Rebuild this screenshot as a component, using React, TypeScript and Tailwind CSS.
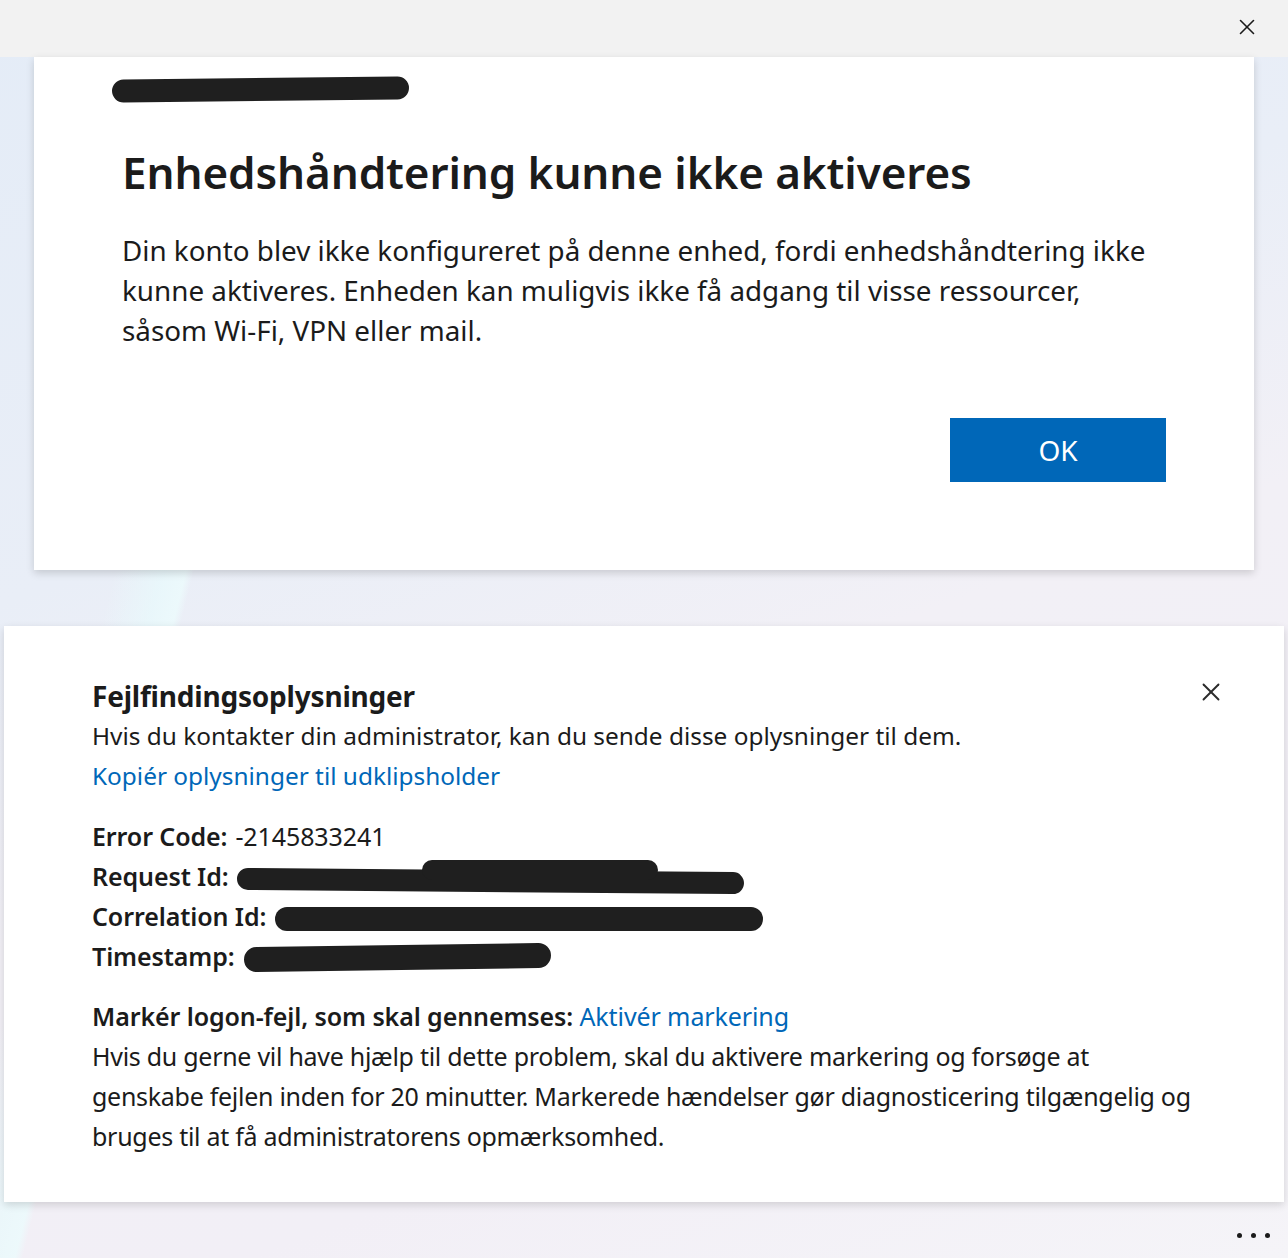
import { X } from "lucide-react";

const font = { fontFamily: '"Noto Sans", "Open Sans", sans-serif' };

const Redact = ({ className }: { className: string }) => (
  <span className={`absolute bg-[#1f1f1f] rounded-full ${className}`} />
);

const InfoRow = ({ label, value, children }: { label: string; value: string; children?: React.ReactNode }) => (
  <div className="relative h-10 flex items-center whitespace-nowrap">
    <span className="font-semibold">{label}</span>
    <span className="ml-[8px]">{value}</span>
    {children}
  </div>
);

export default function App() {
  return (
    <div
      className="relative w-[1288px] h-[1258px] overflow-hidden bg-[linear-gradient(104deg,transparent_0%,transparent_16%,rgba(232,250,252,0.7)_19%,rgba(236,250,252,0.9)_20.5%,transparent_21%),linear-gradient(160deg,#e4ecf7_0%,#e9eef7_35%,#f2f0f6_55%,#f2eff6_78%,#f5f4f8_100%)] text-[#1b1b1b]"
      style={font}
    >
      {/* top bar */}
      <div className="h-[57px] bg-[#f2f2f2] flex items-center justify-end pr-[28px]">
        <X className="w-[26px] h-[26px] -mt-[4px] text-[#1b1b1b]" strokeWidth={1.5} />
      </div>

      {/* main dialog */}
      <div className="mx-[34px] h-[513px] bg-white shadow-[0_3px_8px_rgba(0,0,0,0.16)] px-[88px] flex flex-col">
        <div className="relative h-[44px]">
          <Redact className="left-[-10px] top-[21px] w-[297px] h-[23px] -rotate-[0.6deg]" />
        </div>
        <h1 className="mt-[43px] text-[44px] leading-[56px] font-semibold tracking-[-0.1px] whitespace-nowrap">
          Enhedshåndtering kunne ikke aktiveres
        </h1>
        <p className="mt-[30px] text-[27.8px] leading-[40px] whitespace-nowrap">
          Din konto blev ikke konfigureret på denne enhed, fordi enhedshåndtering ikke
          <br />
          kunne aktiveres. Enheden kan muligvis ikke få adgang til visse ressourcer,
          <br />
          såsom Wi-Fi, VPN eller mail.
        </p>
        <div className="mt-[68px] flex justify-end">
          <button className="w-[216px] h-[64px] bg-[#0067b8] text-white text-[28px]">OK</button>
        </div>
      </div>

      {/* troubleshooting panel */}
      <div className="mt-[56px] mx-[4px] h-[576px] bg-white shadow-[0_3px_8px_rgba(0,0,0,0.14)] pl-[88px] pr-[60px] pt-[50px] text-[25px] leading-[40px]">
        <div className="flex items-start justify-between">
          <div className="text-[28px] leading-[40px] font-bold tracking-[-0.2px]">Fejlfindingsoplysninger</div>
          <X className="w-[30px] h-[30px] mt-[1px] -mr-[2px] text-[#2b2b2b]" strokeWidth={1.5} />
        </div>
        <div className="whitespace-nowrap text-[24.4px]">
          Hvis du kontakter din administrator, kan du sende disse oplysninger til dem.
        </div>
        <div className="text-[#0067b8] text-[24.4px]">Kopiér oplysninger til udklipsholder</div>

        <div className="mt-[20px] tracking-[-0.1px]">
          <InfoRow label="Error Code:" value="-2145833241" />
          <InfoRow label="Request Id:" value="">
            <Redact className="left-[145px] top-[14px] w-[507px] h-[22px] rotate-[0.5deg]" />
            <Redact className="left-[330px] top-[4px] w-[236px] h-[20px]" />
          </InfoRow>
          <InfoRow label="Correlation Id:" value="">
            <Redact className="left-[183px] top-[11px] w-[488px] h-[24px]" />
          </InfoRow>
          <InfoRow label="Timestamp:" value="">
            <Redact className="left-[152px] top-[9px] w-[307px] h-[25px] -rotate-[0.8deg]" />
          </InfoRow>
        </div>

        <div className="mt-[20px]">
          <div className="whitespace-nowrap tracking-[-0.1px]">
            <span className="font-semibold">Markér logon-fejl, som skal gennemses:</span>{" "}
            <span className="text-[#0067b8]">Aktivér markering</span>
          </div>
          <div className="whitespace-nowrap tracking-[-0.28px]">
            Hvis du gerne vil have hjælp til dette problem, skal du aktivere markering og forsøge at
            <br />
            genskabe fejlen inden for 20 minutter. Markerede hændelser gør diagnosticering tilgængelig og
            <br />
            bruges til at få administratorens opmærksomhed.
          </div>
        </div>
      </div>

      {/* more dots */}
      <div className="absolute right-[18px] bottom-[20px] flex gap-[9px]">
        <span className="w-[5px] h-[5px] rounded-full bg-[#1b1b1b]" />
        <span className="w-[5px] h-[5px] rounded-full bg-[#1b1b1b]" />
        <span className="w-[5px] h-[5px] rounded-full bg-[#1b1b1b]" />
      </div>
    </div>
  );
}
